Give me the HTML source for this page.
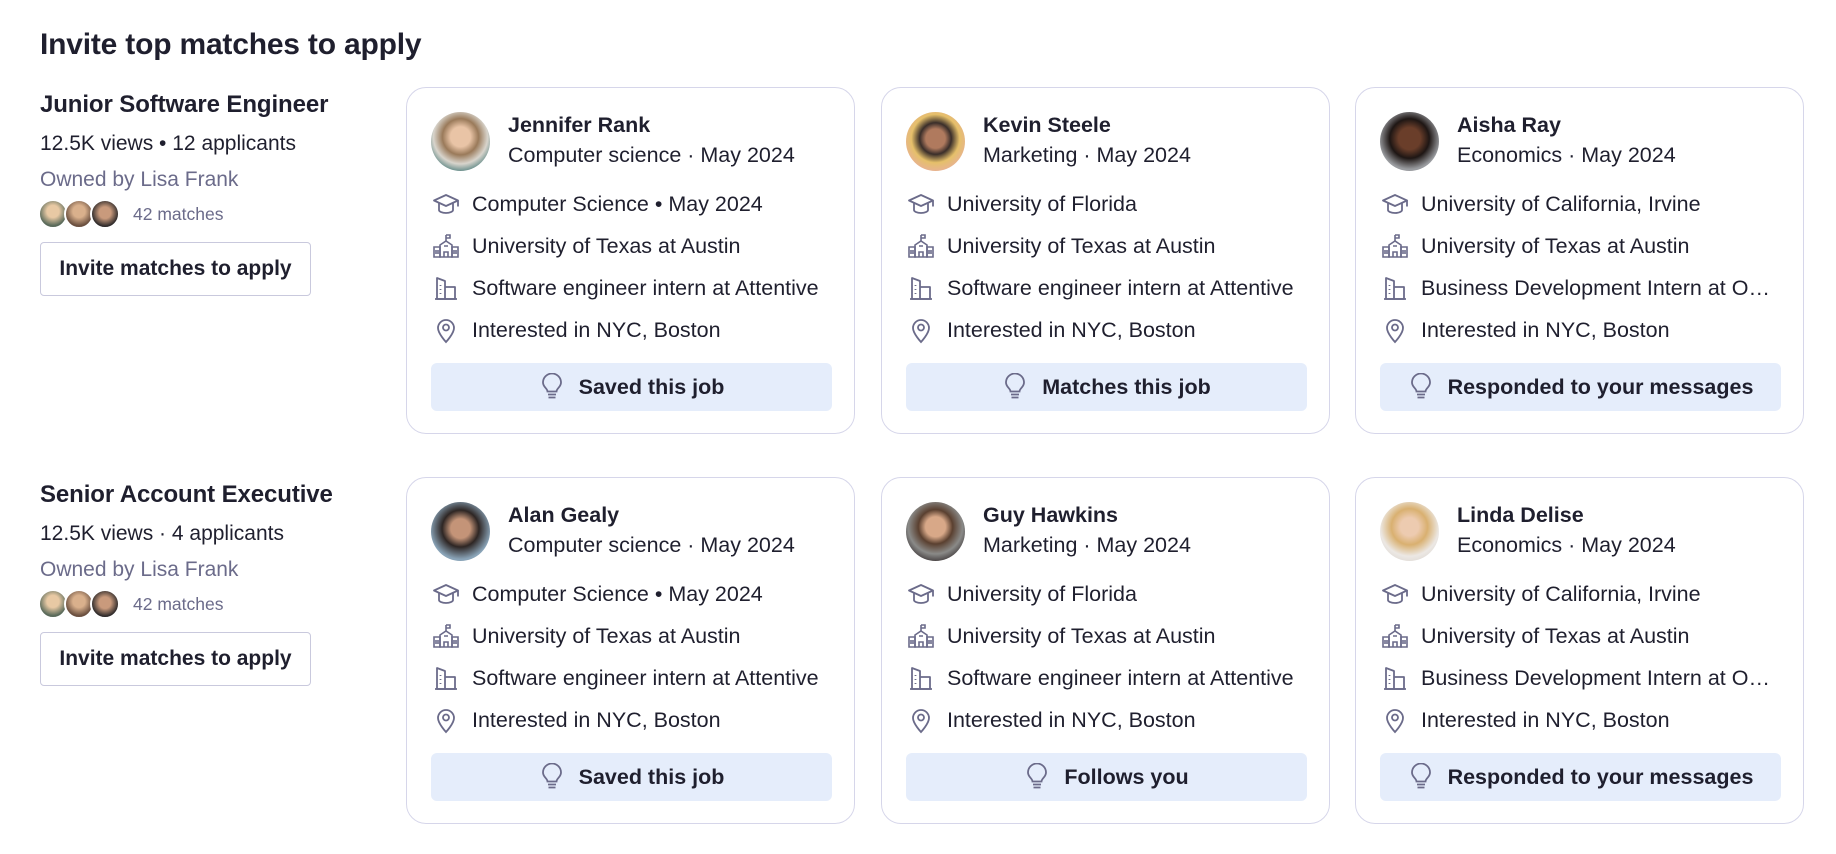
<!DOCTYPE html>
<html><head><meta charset="utf-8"><style>
*{margin:0;padding:0;box-sizing:border-box}
body{width:1836px;height:854px;background:#fff;font-family:"Liberation Sans",sans-serif;color:#1f1f2e;position:relative;overflow:hidden}
.abs{position:absolute;white-space:nowrap}
h1{position:absolute;left:40px;top:28px;font-size:30px;font-weight:bold;letter-spacing:-0.2px}
.jt{font-size:24px;font-weight:bold;letter-spacing:-0.1px}
.meta{font-size:21px}
.own{font-size:21px;color:#6b6b8a}
.mini{position:absolute;width:30px;height:30px;border-radius:50%;border:2px solid #fff}
.mt{font-size:17.5px;color:#6b6b8a}
.btn{position:absolute;left:40px;width:271px;height:54px;border:1.5px solid #c9c9dd;border-radius:4px;font-size:21px;font-weight:bold;display:flex;align-items:center;justify-content:center;color:#1f1f2e}
.card{position:absolute;width:449px;height:347px;border:1.5px solid #d6d6ea;border-radius:20px}
.av{position:absolute;left:24px;top:24px;width:59px;height:59px;border-radius:50%}
.nm{position:absolute;left:101px;top:25px;font-size:21.5px;font-weight:bold;white-space:nowrap}
.sb{position:absolute;left:101px;top:55px;font-size:21.5px;white-space:nowrap}
.row{position:absolute;left:25px;width:405px;height:30px;display:flex;align-items:center;font-size:21.5px;white-space:nowrap}
.row svg{width:28px;height:28px;flex:none;margin-right:12px}
.row span{overflow:hidden;text-overflow:ellipsis}
.bd{position:absolute;left:24px;top:275px;width:401px;height:48px;border-radius:6px;background:#e5edfb;display:flex;align-items:center;justify-content:center;font-size:21.5px;font-weight:bold}
.bd svg{width:26px;height:28px;margin-right:14px}
</style></head><body>
<svg width="0" height="0" style="position:absolute">
<defs>
<symbol id="cap" viewBox="0 0 28 28"><g fill="none" stroke="#6b6b8a" stroke-width="1.8" stroke-linejoin="round"><path d="M2 10.5 14 5l12 5.5-12 5.5z"/><path d="M7 13.5v6.5c0 1.5 3 3 7 3s7-1.5 7-3v-6.5"/><path d="M26 10.5v6"/></g></symbol>
<symbol id="sch" viewBox="0 0 28 28"><g fill="none" stroke="#6b6b8a" stroke-width="1.6"><path d="M14 3v6M14 3h4v3h-4"/><path d="M8 13l6-4 6 4v12H8z"/><path d="M2 15h6v10H2zM20 15h6v10h-6z"/><path d="M12 25v-5h4v5"/><path d="M4 18v4M6 18v4M22 18v4M24 18v4M12 14h4"/></g></symbol>
<symbol id="bld" viewBox="0 0 28 28"><g fill="none" stroke="#6b6b8a" stroke-width="1.8" stroke-linejoin="round"><path d="M5 25V4l8 3v18z"/><path d="M13 13h10v12H13"/><path d="M3 25h22"/><path d="M8.5 11v1M8.5 15v1M8.5 19v1"/></g></symbol>
<symbol id="pin" viewBox="0 0 28 28"><g fill="none" stroke="#6b6b8a" stroke-width="1.8"><path d="M14 26s-8-8.5-8-14a8 8 0 0 1 16 0c0 5.5-8 14-8 14z"/><circle cx="14" cy="11.5" r="3"/></g></symbol>
<symbol id="bulb" viewBox="0 0 26 28"><g fill="none" stroke="#6b6b8a" stroke-width="1.8"><path d="M8.5 18.5c0-3-4.5-4.5-4.5-9a9 9 0 0 1 18 0c0 4.5-4.5 6-4.5 9z"/><path d="M9 21.5h8M9.5 24.5h7"/></g></symbol>
</defs></svg>

<h1>Invite top matches to apply</h1>

<div class="abs jt" style="left:40px;top:91px">Junior Software Engineer</div>
<div class="abs meta" style="left:40px;top:132px">12.5K views • 12 applicants</div>
<div class="abs own" style="left:40px;top:168px">Owned by Lisa Frank</div>
<div class="mini" style="left:38px;top:199px;background:radial-gradient(circle at 50% 40%,#e8c9a4 30%,#5a6a5a 70%)"></div>
<div class="mini" style="left:64px;top:199px;background:radial-gradient(circle at 50% 40%,#d9b08c 30%,#6b5040 70%)"></div>
<div class="mini" style="left:90px;top:199px;background:radial-gradient(circle at 50% 45%,#c99a7c 30%,#2e2a2a 70%)"></div>
<div class="abs mt" style="left:133px;top:204px">42 matches</div>
<div class="btn" style="top:242px">Invite matches to apply</div>

<div class="abs jt" style="left:40px;top:481px">Senior Account Executive</div>
<div class="abs meta" style="left:40px;top:522px">12.5K views · 4 applicants</div>
<div class="abs own" style="left:40px;top:558px">Owned by Lisa Frank</div>
<div class="mini" style="left:38px;top:589px;background:radial-gradient(circle at 50% 40%,#e8c9a4 30%,#5a6a5a 70%)"></div>
<div class="mini" style="left:64px;top:589px;background:radial-gradient(circle at 50% 40%,#d9b08c 30%,#6b5040 70%)"></div>
<div class="mini" style="left:90px;top:589px;background:radial-gradient(circle at 50% 45%,#c99a7c 30%,#2e2a2a 70%)"></div>
<div class="abs mt" style="left:133px;top:594px">42 matches</div>
<div class="btn" style="top:632px">Invite matches to apply</div>

<div class="card" style="left:406px;top:87px">
<div class="av" style="background:radial-gradient(circle at 50% 42%,#e9c4a6 22%,#9a7a5a 40%,#d8d4cc 60%,#2f6a6a 85%)"></div>
<div class="nm">Jennifer Rank</div><div class="sb">Computer science · May 2024</div>
<div class="row" style="top:101px"><svg><use href="#cap"/></svg><span>Computer Science • May 2024</span></div>
<div class="row" style="top:143px"><svg><use href="#sch"/></svg><span>University of Texas at Austin</span></div>
<div class="row" style="top:185px"><svg><use href="#bld"/></svg><span>Software engineer intern at Attentive</span></div>
<div class="row" style="top:227px"><svg><use href="#pin"/></svg><span>Interested in NYC, Boston</span></div>
<div class="bd"><svg><use href="#bulb"/></svg>Saved this job</div>
</div>
<div class="card" style="left:881px;top:87px">
<div class="av" style="background:radial-gradient(circle at 50% 45%,#b07a5e 22%,#3a2e2a 36%,#e6c06a 55%,#e8a8b0 90%)"></div>
<div class="nm">Kevin Steele</div><div class="sb">Marketing · May 2024</div>
<div class="row" style="top:101px"><svg><use href="#cap"/></svg><span>University of Florida</span></div>
<div class="row" style="top:143px"><svg><use href="#sch"/></svg><span>University of Texas at Austin</span></div>
<div class="row" style="top:185px"><svg><use href="#bld"/></svg><span>Software engineer intern at Attentive</span></div>
<div class="row" style="top:227px"><svg><use href="#pin"/></svg><span>Interested in NYC, Boston</span></div>
<div class="bd"><svg><use href="#bulb"/></svg>Matches this job</div>
</div>
<div class="card" style="left:1355px;top:87px">
<div class="av" style="background:radial-gradient(circle at 50% 45%,#6a3e2a 25%,#1e1614 45%,#9a9ca0 70%)"></div>
<div class="nm">Aisha Ray</div><div class="sb">Economics · May 2024</div>
<div class="row" style="top:101px"><svg><use href="#cap"/></svg><span>University of California, Irvine</span></div>
<div class="row" style="top:143px"><svg><use href="#sch"/></svg><span>University of Texas at Austin</span></div>
<div class="row" style="top:185px"><svg><use href="#bld"/></svg><span style="max-width:355px">Business Development Intern at Oracle</span></div>
<div class="row" style="top:227px"><svg><use href="#pin"/></svg><span>Interested in NYC, Boston</span></div>
<div class="bd"><svg><use href="#bulb"/></svg>Responded to your messages</div>
</div>

<div class="card" style="left:406px;top:477px">
<div class="av" style="background:radial-gradient(circle at 50% 45%,#c49478 22%,#2e2624 42%,#8aa4b8 70%)"></div>
<div class="nm">Alan Gealy</div><div class="sb">Computer science · May 2024</div>
<div class="row" style="top:101px"><svg><use href="#cap"/></svg><span>Computer Science • May 2024</span></div>
<div class="row" style="top:143px"><svg><use href="#sch"/></svg><span>University of Texas at Austin</span></div>
<div class="row" style="top:185px"><svg><use href="#bld"/></svg><span>Software engineer intern at Attentive</span></div>
<div class="row" style="top:227px"><svg><use href="#pin"/></svg><span>Interested in NYC, Boston</span></div>
<div class="bd"><svg><use href="#bulb"/></svg>Saved this job</div>
</div>
<div class="card" style="left:881px;top:477px">
<div class="av" style="background:radial-gradient(circle at 50% 42%,#d8a888 22%,#5a4030 38%,#8a8a88 60%,#2a2224 85%)"></div>
<div class="nm">Guy Hawkins</div><div class="sb">Marketing · May 2024</div>
<div class="row" style="top:101px"><svg><use href="#cap"/></svg><span>University of Florida</span></div>
<div class="row" style="top:143px"><svg><use href="#sch"/></svg><span>University of Texas at Austin</span></div>
<div class="row" style="top:185px"><svg><use href="#bld"/></svg><span>Software engineer intern at Attentive</span></div>
<div class="row" style="top:227px"><svg><use href="#pin"/></svg><span>Interested in NYC, Boston</span></div>
<div class="bd"><svg><use href="#bulb"/></svg>Follows you</div>
</div>
<div class="card" style="left:1355px;top:477px">
<div class="av" style="background:radial-gradient(circle at 50% 42%,#edcbb0 20%,#d9b070 40%,#ece8e4 65%,#d8d2cc 90%)"></div>
<div class="nm">Linda Delise</div><div class="sb">Economics · May 2024</div>
<div class="row" style="top:101px"><svg><use href="#cap"/></svg><span>University of California, Irvine</span></div>
<div class="row" style="top:143px"><svg><use href="#sch"/></svg><span>University of Texas at Austin</span></div>
<div class="row" style="top:185px"><svg><use href="#bld"/></svg><span style="max-width:355px">Business Development Intern at Oracle</span></div>
<div class="row" style="top:227px"><svg><use href="#pin"/></svg><span>Interested in NYC, Boston</span></div>
<div class="bd"><svg><use href="#bulb"/></svg>Responded to your messages</div>
</div>
</body></html>
